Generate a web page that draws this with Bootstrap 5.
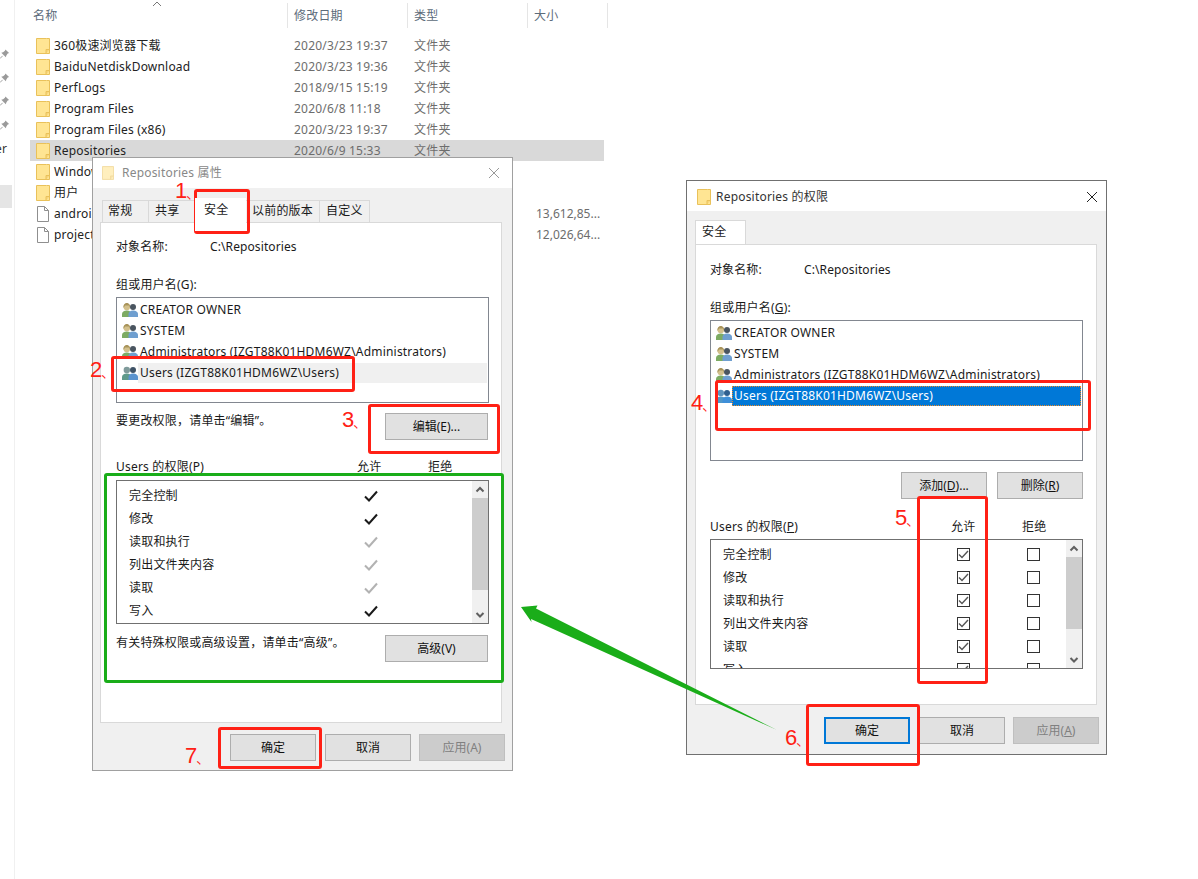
<!DOCTYPE html>
<html lang="zh-CN">
<head>
  <meta charset="UTF-8">
  <meta name="viewport" content="width=device-width, initial-scale=1.0">
  <title>Repositories 权限</title>
  <link href="https://cdn.jsdelivr.net/npm/bootstrap@5.3.0/dist/css/bootstrap.min.css" rel="stylesheet">
  <style>
    body {
      margin: 0;
      background: #fff;
      color: #1a1a1a;
      font: 12px/18px "Noto Sans", "Noto Sans CJK SC", sans-serif;
      letter-spacing: .2px;
    }
    .canvas { position: relative; width: 1198px; height: 879px; overflow: hidden; }

    /* explorer behind the dialogs */
    .explorer { position: absolute; left: 0; top: 0; width: 610px; height: 879px; }
    .side { width: 15px; border-right: 1px solid #f0f0f0; padding-top: 46px; overflow: hidden; }
    .side svg { display: block; margin: 0 0 7.5px -1px; }
    .side-er { margin: 7px 0 0 -5px; color: #333; }
    .side-sel { width: 12px; height: 23px; background: #e5e5e5; margin-top: 27px; }
    .files { padding-left: 15px; width: 589px; }
    .head-row { height: 35px; position: relative; color: #5c6b7a; }
    .head-cell { position: absolute; top: 3px; height: 25px; padding: 4px 0 0 6px; border-right: 1px solid #e5e5e5; }
    .caret-up { position: absolute; left: 122px; top: 1px; }
    .file-row { display: grid; grid-template-columns: 264px 120px 120px 70px; height: 21px; line-height: 21px; color: #6d6d6d; }
    .file-row.picked { background: #d9d9d9; }
    .file-name { display: flex; align-items: center; gap: 4px; padding-left: 6px; color: #222; white-space: nowrap; }
    .file-size { color: #6d6d6d; padding-left: 2px; white-space: nowrap; letter-spacing: 0; }

    /* windows */
    .win { position: absolute; background: #f0f0f0; display: flex; flex-direction: column; }
    .win-one { left: 92px; top: 157px; width: 421px; height: 614px; border: 1px solid #a0a0a0; }
    .win-two { left: 686px; top: 180px; width: 421px; height: 575px; border: 1px solid #707070; }
    .win-title { background: #fff; display: flex; align-items: center; color: #888; }
    .win-one .win-title { height: 30px; padding: 0 12px 0 9px; gap: 8px; margin-bottom: 12px; }
    .win-two .win-title { height: 30px; padding: 1px 8px 0 10px; gap: 5px; color: #333; margin-bottom: 9px; }
    .close-x { margin-left: auto; }

    .tab-strip { display: flex; padding-left: 8px; height: 23px; }
    .win-one .tab-strip { padding-left: 9px; }
    .tab-item { padding: 1px 6px 0; border: 1px solid #d9d9d9; border-bottom: 0; border-left: 0; background: #f0f0f0; white-space: nowrap; }
    .tab-item:first-child { border-left: 1px solid #d9d9d9; }
    .tab-wide { width: 47px; padding-left: 5px; }
    .tab-share { width: 46px; padding-left: 6px; }
    .tab-live { background: #fff; width: 51px; padding: 3px 0 0 9px; height: 33px; margin-top: -2px; position: relative; z-index: 1; border: 0; }
    .tab-single { background: #fff; width: 51px; height: 25px; border: 1px solid #d9d9d9; border-bottom: 0; padding: 2px 0 0 6px; }
    .win-two .tab-strip { height: 25px; }

    .panel { background: #fff; border: 1px solid #d9d9d9; }
    .panel-one { margin: -1px 10px 0 7px; height: 501px; padding: 15px 12px 0 15px; }
    .panel-two { margin: -1px 9px 0 8px; height: 461px; padding: 16px 13px 0 14px; }
    .obj-row { display: flex; letter-spacing: .1px; }
    .obj-label { width: 94px; }
    .group-label { margin-top: 20px; }

    .name-box { border: 1px solid #828790; background: #fff; padding: 1px 1px 0 5px; margin-top: 3px; height: 106px; }
    .panel-two .name-box { height: 141px; }
    .name-row { display: flex; align-items: center; height: 21px; white-space: nowrap; }
    .name-text { flex-grow: 1; padding-left: 2px; height: 20px; line-height: 20px; }
    .name-grey { background: #f0f0f0; }
    .name-blue { background: #0078d7; color: #fff; outline: 1px dotted #f08a24; outline-offset: -1px; }

    .win-btn {
      --bs-btn-padding-y: 0;
      --bs-btn-padding-x: 0;
      --bs-btn-font-size: 12px;
      --bs-btn-line-height: 25px;
      --bs-btn-border-radius: 0;
      --bs-btn-bg: #e1e1e1;
      --bs-btn-border-color: #adadad;
      --bs-btn-color: #111;
      width: 86px;
      height: 27px;
    }
    .win-btn.btn-mid { width: 103px; }
    .win-btn.btn-off { background: #ccc; border-color: #bfbfbf; color: #808080; opacity: 1; }
    .win-btn.btn-focus { border: 2px solid #0078d7; line-height: 23px; }

    .hint-row { margin-top: 10px; padding-right: 1px; display: flex; justify-content: space-between; }
    .hint-row.low { margin-top: 11px; }
    .hint-text { margin-top: -1px; }
    .btn-pair { margin-top: 11px; display: flex; justify-content: flex-end; gap: 10px; }

    .perm-head { display: grid; grid-template-columns: 241px 24px 24px; margin-top: 18px; }
    .panel-two .perm-head { margin-top: 19px; }
    .perm-head span { white-space: nowrap; }
    .perm-head .col-deny { margin-left: 47px; }
    .perm-box { border: 1px solid #707070; display: flex; overflow: hidden; margin-top: 4px; height: 144px; }
    .panel-two .perm-box { margin-top: 3px; height: 130px; }
    .perm-rows { flex-grow: 1; padding-top: 3px; }
    .perm-row { display: grid; grid-template-columns: 229px 22px 22px; height: 23px; padding-left: 12px; align-items: center; }
    .perm-row > :nth-child(3) { margin-left: 53px; }
    .tick { width: 22px; padding-left: 4px; display: flex; justify-content: center; }
    .tick-box { width: 13px; height: 13px; border: 1px solid #333; background: #fff; display: flex; align-items: center; justify-content: center; margin: 0 auto; }

    .scroll-rail { width: 16px; background: #f0f0f0; display: flex; flex-direction: column; align-items: center; flex: none; }
    .scroll-rail svg { height: 17px; flex: none; }
    .scroll-fill { width: 100%; flex-grow: 1; }
    .thumb-one { width: 100%; height: 92px; background: #cdcdcd; flex: none; }
    .thumb-two { width: 100%; height: 72px; background: #cdcdcd; flex: none; }

    .win-foot { display: flex; justify-content: flex-end; gap: 8px; padding-right: 7px; }
    .win-foot > :first-child { margin-right: 1px; }
    .win-one .win-foot { margin-top: 11px; }
    .win-two .win-foot { margin-top: 12px; }

    /* annotations painted on top of the screenshot */
    .mark-box { position: absolute; border: 3px solid #ff2015; border-radius: 3px; }
    .mark-green { border-color: #1aad19; }
    .mark-num { position: absolute; color: #ff2015; font: 22px/24px "Liberation Sans", "Noto Sans CJK SC", sans-serif; white-space: nowrap; letter-spacing: 0; }
    .mark-num i { font-style: normal; font-size: 13px; margin-left: -1px; }
    .arrow-layer { position: absolute; left: 0; top: 0; }
  </style>
</head>
<body>
  <svg class="d-none" xmlns="http://www.w3.org/2000/svg">
    <symbol id="folder" viewBox="0 0 14 16">
      <path d="M.5.5h10l3 0v15H.5z" fill="#ffe593" stroke="#e9c15a"/>
      <path d="M10 15.5v-4h3.5" fill="#f7d57a" stroke="#e9c15a"/>
    </symbol>
    <symbol id="doc" viewBox="0 0 12 16">
      <path d="M.5.5h7l4 4v11H.5z" fill="#fff" stroke="#8f8f8f"/>
      <path d="M7.5.5v4h4" fill="none" stroke="#8f8f8f"/>
    </symbol>
    <symbol id="pin" viewBox="0 0 12 12">
      <path d="M7 1l4 4-1.500.5L8 7.500 7.500 9.500 2.500 4.500 4.500 4 6.500 2.500z" fill="#9a9a9a"/>
      <path d="M4 8l-3 3" stroke="#9a9a9a" fill="none"/>
    </symbol>
    <symbol id="people" viewBox="0 0 16 16">
      <circle cx="4.800" cy="5" r="3.200" fill="#d3c08c"/>
      <path d="M1.500 6c-.5-3.500 1.500-5 3.300-5s3.800 1.500 3.300 5L7 3.500H3z" fill="#a8935a"/>
      <path d="M0 15v-3c0-2 2-3.500 4.800-3.500S9.500 10 9.500 12v3z" fill="#7dab63"/>
      <circle cx="11" cy="5" r="3" fill="#4a5560"/>
      <path d="M6.500 15v-3c0-2 2-3.500 4.500-3.500S16 10 16 12v3z" fill="#6f9fd0"/>
    </symbol>
    <symbol id="people-on" viewBox="0 0 16 16">
      <circle cx="4.800" cy="5" r="3.200" fill="#7f9a9a"/>
      <path d="M0 15v-3c0-2 2-3.500 4.800-3.500S9.500 10 9.500 12v3z" fill="#5f9a8a"/>
      <circle cx="11" cy="5" r="3" fill="#3f5266"/>
      <path d="M6.500 15v-3c0-2 2-3.500 4.500-3.500S16 10 16 12v3z" fill="#5a93cf"/>
    </symbol>
    <symbol id="people-blue" viewBox="0 0 16 16">
      <circle cx="4.800" cy="5" r="3.200" fill="#5f93bd"/>
      <path d="M0 15v-3c0-2 2-3.500 4.800-3.500S9.500 10 9.500 12v3z" fill="#4f97c9"/>
      <circle cx="11" cy="5" r="3" fill="#2f5f8f"/>
      <path d="M6.500 15v-3c0-2 2-3.500 4.500-3.500S16 10 16 12v3z" fill="#3f8fd8"/>
    </symbol>
    <symbol id="tick" viewBox="0 0 14 12">
      <path d="M1 6.500l4 4 8-9" fill="none" stroke="currentColor" stroke-width="2"/>
    </symbol>
    <symbol id="tick-thin" viewBox="0 0 11 9">
      <path d="M1 4.500l3 3 6-6.500" fill="none" stroke="#555" stroke-width="1.400"/>
    </symbol>
    <symbol id="chev-up" viewBox="0 0 16 17">
      <path d="M4.500 10.500L8 7l3.500 3.500" fill="none" stroke="#606060" stroke-width="2"/>
    </symbol>
    <symbol id="chev-down" viewBox="0 0 16 17">
      <path d="M4.500 7L8 10.500 11.500 7" fill="none" stroke="#606060" stroke-width="2"/>
    </symbol>
  </svg>

  <div class="canvas">
    <div class="explorer d-flex">
      <div class="side flex-shrink-0">
        <svg width="11" height="16"><use href="#pin"/></svg>
        <svg width="11" height="16"><use href="#pin"/></svg>
        <svg width="11" height="16"><use href="#pin"/></svg>
        <svg width="11" height="16"><use href="#pin"/></svg>
        <div class="side-er">er</div>
        <div class="side-sel"></div>
      </div>
      <div class="files">
        <div class="head-row">
          <svg class="caret-up" width="10" height="6" viewBox="0 0 10 6"><path d="M1 5l4-4 4 4" fill="none" stroke="#777"/></svg>
          <div class="head-cell" style="left:-3px;width:261px">名称</div>
          <div class="head-cell" style="left:258px;width:120px">修改日期</div>
          <div class="head-cell" style="left:378px;width:120px">类型</div>
          <div class="head-cell" style="left:498px;width:80px">大小</div>
        </div>
        <div class="file-row"><div class="file-name"><svg width="14" height="16"><use href="#folder"/></svg>360极速浏览器下载</div><div>2020/3/23 19:37</div><div>文件夹</div></div>
        <div class="file-row"><div class="file-name"><svg width="14" height="16"><use href="#folder"/></svg>BaiduNetdiskDownload</div><div>2020/3/23 19:36</div><div>文件夹</div></div>
        <div class="file-row"><div class="file-name"><svg width="14" height="16"><use href="#folder"/></svg>PerfLogs</div><div>2018/9/15 15:19</div><div>文件夹</div></div>
        <div class="file-row"><div class="file-name"><svg width="14" height="16"><use href="#folder"/></svg>Program Files</div><div>2020/6/8 11:18</div><div>文件夹</div></div>
        <div class="file-row"><div class="file-name"><svg width="14" height="16"><use href="#folder"/></svg>Program Files (x86)</div><div>2020/3/23 19:37</div><div>文件夹</div></div>
        <div class="file-row picked"><div class="file-name"><svg width="14" height="16"><use href="#folder"/></svg>Repositories</div><div>2020/6/9 15:33</div><div>文件夹</div></div>
        <div class="file-row"><div class="file-name"><svg width="14" height="16"><use href="#folder"/></svg>Windows</div></div>
        <div class="file-row"><div class="file-name"><svg width="14" height="16"><use href="#folder"/></svg>用户</div></div>
        <div class="file-row"><div class="file-name"><svg width="14" height="16"><use href="#doc"/></svg>android-studio</div><div></div><div></div><div class="file-size">13,612,85...</div></div>
        <div class="file-row"><div class="file-name"><svg width="14" height="16"><use href="#doc"/></svg>project</div><div></div><div></div><div class="file-size">12,026,64...</div></div>
      </div>
    </div>

    <!-- 属性 window -->
    <div class="win win-one">
      <div class="win-title">
        <svg width="12" height="14" opacity=".6"><use href="#folder"/></svg>
        <span>Repositories 属性</span>
        <svg class="close-x" width="12" height="12" viewBox="0 0 12 12"><path d="M1 1l10 10M11 1L1 11" stroke="#999" fill="none"/></svg>
      </div>
      <div class="tab-strip">
        <div class="tab-item tab-wide">常规</div>
        <div class="tab-item tab-share">共享</div>
        <div class="tab-item tab-live">安全</div>
        <div class="tab-item">以前的版本</div>
        <div class="tab-item">自定义</div>
      </div>
      <div class="panel panel-one">
        <div class="obj-row"><span class="obj-label">对象名称:</span><span>C:\Repositories</span></div>
        <div class="group-label">组或用户名(G):</div>
        <div class="name-box">
          <div class="name-row"><svg width="16" height="16"><use href="#people"/></svg><span class="name-text">CREATOR OWNER</span></div>
          <div class="name-row"><svg width="16" height="16"><use href="#people"/></svg><span class="name-text">SYSTEM</span></div>
          <div class="name-row"><svg width="16" height="16"><use href="#people"/></svg><span class="name-text">Administrators (IZGT88K01HDM6WZ\Administrators)</span></div>
          <div class="name-row"><svg width="16" height="16"><use href="#people-on"/></svg><span class="name-text name-grey">Users (IZGT88K01HDM6WZ\Users)</span></div>
        </div>
        <div class="hint-row">
          <span class="hint-text">要更改权限，请单击“编辑”。</span>
          <button type="button" class="btn win-btn btn-mid">编辑(E)...</button>
        </div>
        <div class="perm-head"><span>Users 的权限(P)</span><span>允许</span><span class="col-deny">拒绝</span></div>
        <div class="perm-box">
          <div class="perm-rows">
            <div class="perm-row"><span>完全控制</span><span class="tick"><svg width="14" height="12"><use href="#tick"/></svg></span><span></span></div>
            <div class="perm-row"><span>修改</span><span class="tick"><svg width="14" height="12"><use href="#tick"/></svg></span><span></span></div>
            <div class="perm-row"><span>读取和执行</span><span class="tick text-black-50"><svg width="14" height="12" opacity=".6"><use href="#tick"/></svg></span><span></span></div>
            <div class="perm-row"><span>列出文件夹内容</span><span class="tick text-black-50"><svg width="14" height="12" opacity=".6"><use href="#tick"/></svg></span><span></span></div>
            <div class="perm-row"><span>读取</span><span class="tick text-black-50"><svg width="14" height="12" opacity=".6"><use href="#tick"/></svg></span><span></span></div>
            <div class="perm-row"><span>写入</span><span class="tick"><svg width="14" height="12"><use href="#tick"/></svg></span><span></span></div>
          </div>
          <div class="scroll-rail">
            <svg width="16" height="17"><use href="#chev-up"/></svg>
            <div class="thumb-one"></div>
            <div class="scroll-fill"></div>
            <svg width="16" height="17"><use href="#chev-down"/></svg>
          </div>
        </div>
        <div class="hint-row low">
          <span class="hint-text">有关特殊权限或高级设置，请单击“高级”。</span>
          <button type="button" class="btn win-btn btn-mid">高级(V)</button>
        </div>
      </div>
      <div class="win-foot">
        <button type="button" class="btn win-btn">确定</button>
        <button type="button" class="btn win-btn">取消</button>
        <button type="button" class="btn win-btn btn-off">应用(A)</button>
      </div>
    </div>

    <!-- 权限 window -->
    <div class="win win-two">
      <div class="win-title">
        <svg width="14" height="16"><use href="#folder"/></svg>
        <span>Repositories 的权限</span>
        <svg class="close-x" width="12" height="12" viewBox="0 0 12 12"><path d="M1 1l10 10M11 1L1 11" stroke="#222" fill="none"/></svg>
      </div>
      <div class="tab-strip">
        <div class="tab-single">安全</div>
      </div>
      <div class="panel panel-two">
        <div class="obj-row"><span class="obj-label">对象名称:</span><span>C:\Repositories</span></div>
        <div class="group-label">组或用户名(<u>G</u>):</div>
        <div class="name-box">
          <div class="name-row"><svg width="16" height="16"><use href="#people"/></svg><span class="name-text">CREATOR OWNER</span></div>
          <div class="name-row"><svg width="16" height="16"><use href="#people"/></svg><span class="name-text">SYSTEM</span></div>
          <div class="name-row"><svg width="16" height="16"><use href="#people"/></svg><span class="name-text">Administrators (IZGT88K01HDM6WZ\Administrators)</span></div>
          <div class="name-row"><svg width="16" height="16"><use href="#people-blue"/></svg><span class="name-text name-blue">Users (IZGT88K01HDM6WZ\Users)</span></div>
        </div>
        <div class="btn-pair">
          <button type="button" class="btn win-btn">添加(<u>D</u>)...</button>
          <button type="button" class="btn win-btn">删除(<u>R</u>)</button>
        </div>
        <div class="perm-head"><span>Users 的权限(<u>P</u>)</span><span>允许</span><span class="col-deny">拒绝</span></div>
        <div class="perm-box">
          <div class="perm-rows">
            <div class="perm-row"><span>完全控制</span><span class="tick-box"><svg width="11" height="9"><use href="#tick-thin"/></svg></span><span class="tick-box"></span></div>
            <div class="perm-row"><span>修改</span><span class="tick-box"><svg width="11" height="9"><use href="#tick-thin"/></svg></span><span class="tick-box"></span></div>
            <div class="perm-row"><span>读取和执行</span><span class="tick-box"><svg width="11" height="9"><use href="#tick-thin"/></svg></span><span class="tick-box"></span></div>
            <div class="perm-row"><span>列出文件夹内容</span><span class="tick-box"><svg width="11" height="9"><use href="#tick-thin"/></svg></span><span class="tick-box"></span></div>
            <div class="perm-row"><span>读取</span><span class="tick-box"><svg width="11" height="9"><use href="#tick-thin"/></svg></span><span class="tick-box"></span></div>
            <div class="perm-row"><span>写入</span><span class="tick-box"><svg width="11" height="9"><use href="#tick-thin"/></svg></span><span class="tick-box"></span></div>
          </div>
          <div class="scroll-rail">
            <svg width="16" height="17"><use href="#chev-up"/></svg>
            <div class="thumb-two"></div>
            <div class="scroll-fill"></div>
            <svg width="16" height="17"><use href="#chev-down"/></svg>
          </div>
        </div>
      </div>
      <div class="win-foot">
        <button type="button" class="btn win-btn btn-focus">确定</button>
        <button type="button" class="btn win-btn">取消</button>
        <button type="button" class="btn win-btn btn-off">应用(<u>A</u>)</button>
      </div>
    </div>

    <!-- red and green call-outs -->
    <svg class="arrow-layer" width="1198" height="879" viewBox="0 0 1198 879">
      <polygon points="521,607 537.500,605.500 536,608.500 777,730 531,619 531.500,622" fill="#1aad19"/>
    </svg>
    <div class="mark-box" style="left:194px;top:189px;width:56px;height:45px"></div>
    <div class="mark-box" style="left:111px;top:356px;width:244px;height:36px"></div>
    <div class="mark-box" style="left:368px;top:404px;width:132px;height:50px"></div>
    <div class="mark-box mark-green" style="left:104px;top:473px;width:400px;height:210px"></div>
    <div class="mark-box" style="left:218px;top:727px;width:104px;height:42px"></div>
    <div class="mark-box" style="left:715px;top:380px;width:376px;height:51px"></div>
    <div class="mark-box" style="left:917px;top:496px;width:71px;height:188px"></div>
    <div class="mark-box" style="left:806px;top:704px;width:114px;height:62px"></div>
    <span class="mark-num" style="left:175px;top:179px">1<i>、</i></span>
    <span class="mark-num" style="left:90px;top:358px">2<i>、</i></span>
    <span class="mark-num" style="left:342px;top:408px">3<i>、</i></span>
    <span class="mark-num" style="left:691px;top:391px">4<i>、</i></span>
    <span class="mark-num" style="left:895px;top:506px">5<i>、</i></span>
    <span class="mark-num" style="left:785px;top:726px">6<i>、</i></span>
    <span class="mark-num" style="left:185px;top:744px">7<i>、</i></span>
  </div>

  <script src="https://cdn.jsdelivr.net/npm/bootstrap@5.3.0/dist/js/bootstrap.bundle.min.js"></script>
</body>
</html>
